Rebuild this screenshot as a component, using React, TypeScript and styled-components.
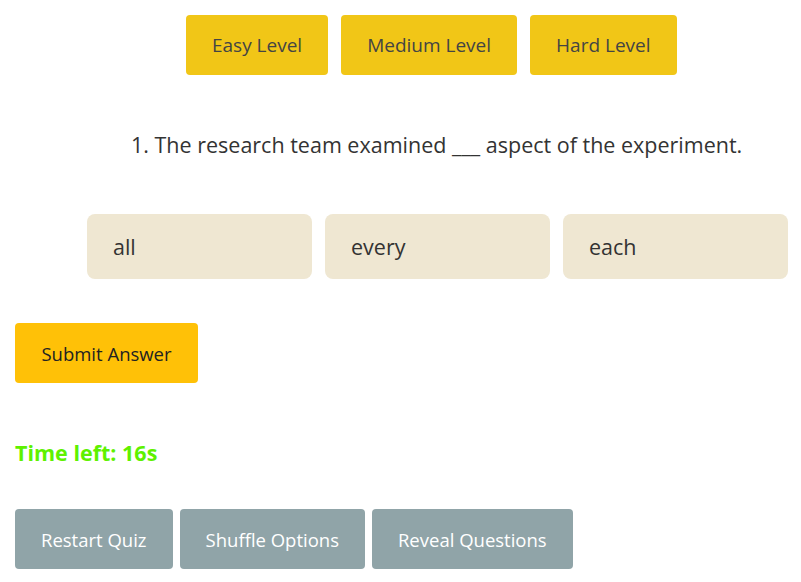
import { useState } from 'react';
import styled, { createGlobalStyle } from 'styled-components';

const GlobalStyle = createGlobalStyle`
    html, body {
        margin: 0;
        padding: 0;
        background: #ffffff;
        overflow: hidden;
    }
    body {
        font-family: 'Open Sans', 'Noto Sans', sans-serif;
        color: #333333;
    }
`;

const Page = styled.div`
    display: flex;
    flex-direction: column;
    padding: 15px 15px 0 15px;
`;

const LevelRow = styled.div`
    display: flex;
    gap: 13px;
    padding-left: 171px;
`;

const LevelBtn = styled.button`
    height: 60px;
    padding: 0 26px;
    border: 0;
    border-radius: 4px;
    background: #f1c617;
    color: #444444;
    font-family: inherit;
    font-size: 19px;
    cursor: pointer;
`;

const Question = styled.p`
    margin: 54px 0 0 0;
    padding-left: 116px;
    font-size: 21.5px;
    line-height: 32px;
    color: #333333;
`;

const OptionsRow = styled.div`
    display: grid;
    grid-template-columns: repeat(3, 225px);
    gap: 13px;
    margin: 53px 0 0 72px;
`;

const Option = styled.button<{ $active?: boolean }>`
    height: 65px;
    padding: 0 26px;
    border: 0;
    border-radius: 8px;
    background: ${p => (p.$active ? '#e6dbbc' : '#efe7d2')};
    color: #333333;
    font-family: inherit;
    font-size: 21.5px;
    text-align: left;
    cursor: pointer;
`;

const SubmitBtn = styled.button`
    align-self: flex-start;
    width: 183px;
    height: 60px;
    margin-top: 44px;
    border: 0;
    border-radius: 4px;
    background: #ffc107;
    color: #222222;
    font-family: inherit;
    font-size: 18.5px;
    cursor: pointer;
`;

const Timer = styled.div`
    margin-top: 56px;
    font-size: 21.5px;
    font-weight: 700;
    line-height: 28px;
    color: #5ef100;
`;

const ActionRow = styled.div`
    display: flex;
    gap: 7px;
    margin-top: 42px;
`;

const ActionBtn = styled.button`
    height: 60px;
    padding: 0 26px;
    border: 0;
    border-radius: 4px;
    background: #90a4a8;
    color: #ffffff;
    font-family: inherit;
    font-size: 18.5px;
    cursor: pointer;
`;

const options = ['all', 'every', 'each'];

export default function App() {
    const [picked, setPicked] = useState<string | null>(null);

    return (
        <Page>
            <GlobalStyle />
            <LevelRow>
                <LevelBtn>Easy Level</LevelBtn>
                <LevelBtn>Medium Level</LevelBtn>
                <LevelBtn>Hard Level</LevelBtn>
            </LevelRow>

            <Question>1. The research team examined ___ aspect of the experiment.</Question>

            <OptionsRow>
                {options.map(o => (
                    <Option key={o} $active={picked === o} onClick={() => setPicked(o)}>
                        {o}
                    </Option>
                ))}
            </OptionsRow>

            <SubmitBtn>Submit Answer</SubmitBtn>

            <Timer>Time left: 16s</Timer>

            <ActionRow>
                <ActionBtn>Restart Quiz</ActionBtn>
                <ActionBtn>Shuffle Options</ActionBtn>
                <ActionBtn>Reveal Questions</ActionBtn>
            </ActionRow>
        </Page>
    );
}
